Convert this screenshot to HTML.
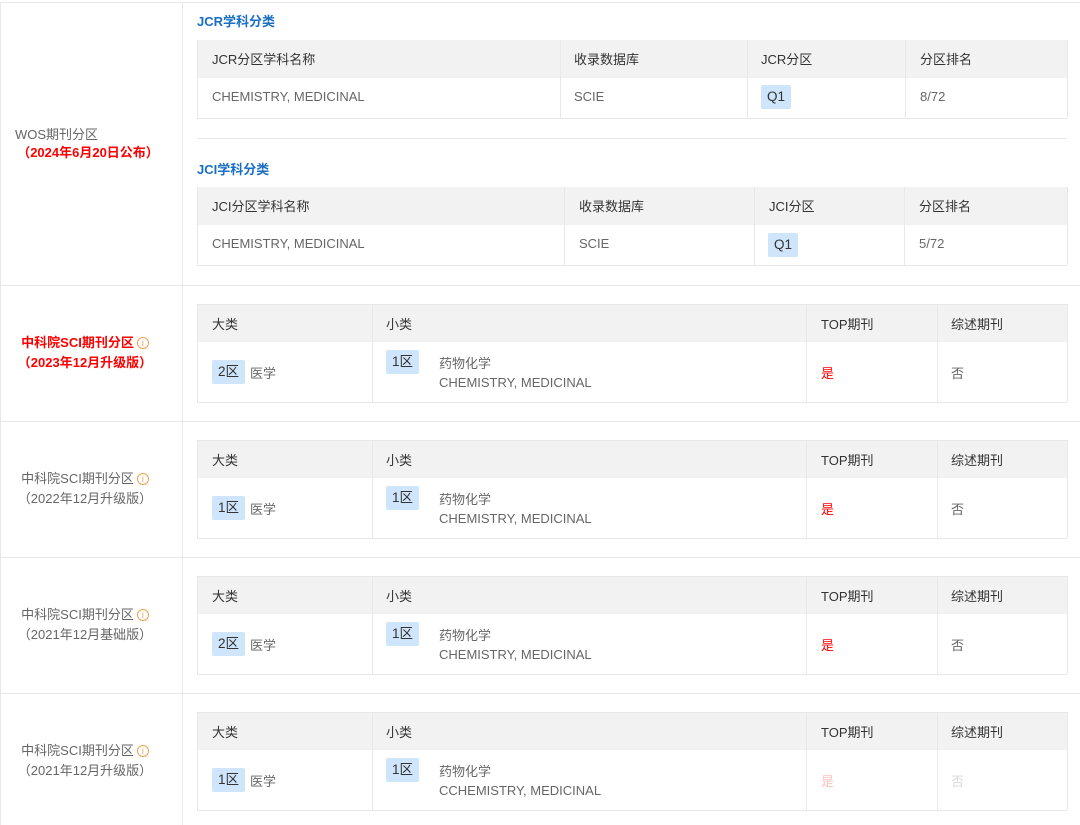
<!DOCTYPE html>
<html><head><meta charset="utf-8"><style>
*{margin:0;padding:0;box-sizing:border-box}
body{width:1080px;height:825px;background:#fff;position:relative;overflow:hidden;font-family:"Liberation Sans","Noto Sans CJK SC",sans-serif;font-size:13px;color:#333}
.a{position:absolute}
.hl{position:absolute;height:1px;background:#e8e8e8}
.vl{position:absolute;width:1px;background:#e8e8e8}
.hd{position:absolute;background:#f2f2f2}
.g{color:#666}
.tag{position:absolute;background:#cfe5fb;color:#333;border-radius:2px;height:24px;line-height:24px;padding:0 6px;font-size:13.5px}
.lab{position:absolute;left:0;width:170px;text-align:center;line-height:20px}
.red{color:#f00;font-weight:bold}
.ic{display:inline-block;width:12px;height:12px;border:1px solid #f0a050;border-radius:50%;color:#f0a050;font-size:9px;line-height:10px;text-align:center;vertical-align:1px;margin-left:3px;font-weight:normal}
.t{position:absolute;color:#1a6fc4;font-weight:bold}
</style></head><body>
<div class="hl" style="left:0;top:2px;width:1080px"></div>
<div class="vl" style="left:182px;top:2px;height:823px"></div>
<div class="vl" style="left:0;top:2px;height:823px"></div>
<div class="hl" style="left:0;top:285px;width:1080px"></div>
<div class="hl" style="left:0;top:421px;width:1080px"></div>
<div class="hl" style="left:0;top:557px;width:1080px"></div>
<div class="hl" style="left:0;top:693px;width:1080px"></div>

<div class="a g" style="top:124px;left:15px">WOS期刊分区</div>
<div class="lab red" style="top:143px;width:176px">（2024年6月20日公布）</div>

<div class="t" style="left:197px;top:11px">JCR学科分类</div>
<div class="hd" style="left:197px;top:40px;width:870px;height:38px"></div>
<div class="hl" style="left:197px;top:118px;width:870px"></div>
<div class="vl" style="left:197px;top:40px;height:78px"></div><div class="vl" style="left:1067px;top:40px;height:78px"></div>
<div class="vl" style="left:560px;top:40px;height:78px"></div><div class="vl" style="left:747px;top:40px;height:78px"></div><div class="vl" style="left:905px;top:40px;height:78px"></div>
<div class="a" style="left:212px;top:49px">JCR分区学科名称</div><div class="a" style="left:574px;top:49px">收录数据库</div><div class="a" style="left:761px;top:49px">JCR分区</div><div class="a" style="left:920px;top:49px">分区排名</div>
<div class="a g" style="left:212px;top:89px">CHEMISTRY, MEDICINAL</div><div class="a g" style="left:574px;top:89px">SCIE</div><div class="tag" style="left:761px;top:85px">Q1</div><div class="a g" style="left:920px;top:89px">8/72</div>
<div class="hl" style="left:197px;top:138px;width:870px"></div>

<div class="t" style="left:197px;top:159px">JCI学科分类</div>
<div class="hd" style="left:197px;top:187px;width:870px;height:38px"></div>
<div class="hl" style="left:197px;top:265px;width:870px"></div>
<div class="vl" style="left:197px;top:187px;height:78px"></div><div class="vl" style="left:1067px;top:187px;height:78px"></div>
<div class="vl" style="left:564px;top:187px;height:78px"></div><div class="vl" style="left:754px;top:187px;height:78px"></div><div class="vl" style="left:904px;top:187px;height:78px"></div>
<div class="a" style="left:212px;top:196px">JCI分区学科名称</div><div class="a" style="left:579px;top:196px">收录数据库</div><div class="a" style="left:769px;top:196px">JCI分区</div><div class="a" style="left:919px;top:196px">分区排名</div>
<div class="a g" style="left:212px;top:236px">CHEMISTRY, MEDICINAL</div><div class="a g" style="left:579px;top:236px">SCIE</div><div class="tag" style="left:768px;top:233px">Q1</div><div class="a g" style="left:919px;top:236px">5/72</div>

<div id="s"></div>
<script>
var d=[
[304,'red','中科院SCI期刊分区','（2023年12月升级版）','2区','CHEMISTRY, MEDICINAL',1],
[440,'g','中科院SCI期刊分区','（2022年12月升级版）','1区','CHEMISTRY, MEDICINAL',1],
[576,'g','中科院SCI期刊分区','（2021年12月基础版）','2区','CHEMISTRY, MEDICINAL',1],
[712,'g','中科院SCI期刊分区','（2021年12月升级版）','1区','CCHEMISTRY, MEDICINAL',0]];
var h='';
d.forEach(function(r){var y=r[0];
h+='<div class="lab '+r[1]+'" style="top:'+(y+29)+'px">'+r[2]+'<span class="ic">i</span></div>';
h+='<div class="lab '+r[1]+'" style="top:'+(y+49)+'px">'+r[3]+'</div>';
h+='<div class="hd" style="left:197px;top:'+y+'px;width:870px;height:38px"></div>';
h+='<div class="hl" style="left:197px;top:'+y+'px;width:870px"></div>';
h+='<div class="hl" style="left:197px;top:'+(y+98)+'px;width:870px"></div>';
[197,372,806,937,1067].forEach(function(x){h+='<div class="vl" style="left:'+x+'px;top:'+y+'px;height:98px"></div>';});
h+='<div class="a" style="left:212px;top:'+(y+10)+'px">大类</div><div class="a" style="left:386px;top:'+(y+10)+'px">小类</div><div class="a" style="left:821px;top:'+(y+10)+'px">TOP期刊</div><div class="a" style="left:951px;top:'+(y+10)+'px">综述期刊</div>';
h+='<div class="tag" style="left:212px;top:'+(y+56)+'px">'+r[4]+'</div><div class="a g" style="left:250px;top:'+(y+59)+'px">医学</div>';
h+='<div class="tag" style="left:386px;top:'+(y+46)+'px">1区</div><div class="a g" style="left:439px;top:'+(y+49)+'px">药物化学</div><div class="a g" style="left:439px;top:'+(y+71)+'px">'+r[5]+'</div>';
var op=r[6]?1:0.25;
h+='<div class="a" style="left:821px;top:'+(y+59)+'px;color:#f00;opacity:'+op+'">是</div><div class="a g" style="left:951px;top:'+(y+59)+'px;opacity:'+op+'">否</div>';
});
document.getElementById('s').innerHTML=h;
</script>
</body></html>
